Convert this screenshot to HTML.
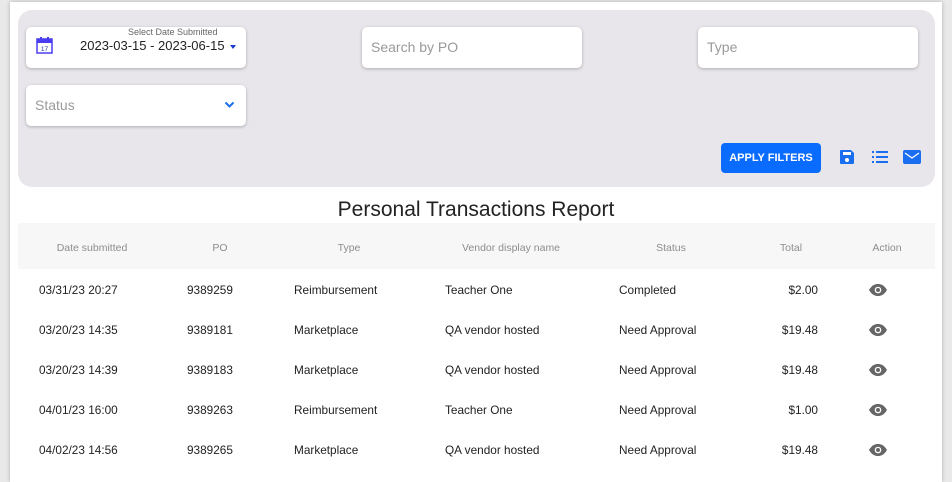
<!DOCTYPE html>
<html><head><style>
*{margin:0;padding:0;box-sizing:border-box}
body{width:952px;height:472px;background:#e9e9e9;font-family:"Liberation Sans",sans-serif;position:relative;overflow:hidden}
.card{position:absolute;left:10px;top:2px;width:932px;height:480px;background:#fff;box-shadow:0 0 4px rgba(0,0,0,.25)}
.panel{position:absolute;left:18px;top:10px;width:917px;height:177px;background:#e8e6eb;border-radius:14px}
.box{position:absolute;background:#fff;border-radius:5px;box-shadow:0 1px 3px rgba(0,0,0,.25);height:41px;width:220px}
.ph{position:absolute;left:9px;top:12px;font-size:14px;color:#9a9a9a}
.t{position:absolute;font-size:11.8px;color:#222;white-space:nowrap}
.h{position:absolute;font-size:10.5px;color:#8d8d8d;white-space:nowrap;transform:translateX(-50%)}
.eye{position:absolute;left:868px}
</style></head><body>
<div class="card"></div>
<div class="panel"></div>
<div class="box" style="left:26px;top:27px">
 <svg style="position:absolute;left:10px;top:9px" width="17" height="18" viewBox="0 0 17 18"><rect x="1" y="3" width="15" height="14" fill="#fff" stroke="#4a3cf0" stroke-width="1.5"/><rect x="1" y="3" width="15" height="4" fill="#4a3cf0"/><rect x="4" y="1" width="2" height="4" fill="#4a3cf0"/><rect x="11" y="1" width="2" height="4" fill="#4a3cf0"/><text x="8.5" y="15" font-size="6.5" text-anchor="middle" fill="#2233aa" font-family="Liberation Sans">17</text></svg>
 <div style="position:absolute;left:102px;top:0px;font-size:9px;color:#666">Select Date Submitted</div>
 <div style="position:absolute;left:54px;top:11px;font-size:13px;color:#222">2023-03-15 - 2023-06-15</div>
 <div style="position:absolute;left:204px;top:18px;border:3.5px solid transparent;border-top:4px solid #1a3fd0;border-bottom:0"></div>
</div>
<div class="box" style="left:362px;top:27px"><div class="ph">Search by PO</div></div>
<div class="box" style="left:698px;top:27px"><div class="ph">Type</div></div>
<div class="box" style="left:26px;top:85px"><div class="ph">Status</div>
 <svg style="position:absolute;left:198px;top:16px" width="11" height="8" viewBox="0 0 11 8"><path d="M1.5 1.5 L5.5 5.5 L9.5 1.5" stroke="#1a6ef0" stroke-width="2" fill="none"/></svg></div>
<div style="position:absolute;left:721px;top:143px;width:100px;height:30px;background:#0a6cff;border-radius:4px;color:#fff;font-weight:bold;font-size:11px;text-align:center;line-height:31px">APPLY FILTERS</div>
<svg style="position:absolute;left:839px;top:149px" width="16" height="16" viewBox="0 0 16 16"><path d="M1 2a1 1 0 0 1 1-1h10l3 3v10a1 1 0 0 1-1 1H2a1 1 0 0 1-1-1z" fill="#1a6ef0"/><rect x="4" y="3" width="8" height="3" fill="#fff"/><circle cx="8" cy="11" r="2" fill="#fff"/></svg>
<svg style="position:absolute;left:872px;top:151px" width="16" height="12" viewBox="0 0 16 12"><g fill="#1a6ef0"><rect x="0" y="0" width="2" height="2"/><rect x="4" y="0" width="12" height="2"/><rect x="0" y="5" width="2" height="2"/><rect x="4" y="5" width="12" height="2"/><rect x="0" y="10" width="2" height="2"/><rect x="4" y="10" width="12" height="2"/></g></svg>
<svg style="position:absolute;left:903px;top:150px" width="18" height="14" viewBox="0 0 18 14"><rect x="0" y="0" width="18" height="14" rx="2" fill="#1a6ef0"/><path d="M2 3 L9 8 L16 3" stroke="#fff" stroke-width="1.3" fill="none"/></svg>
<div style="position:absolute;left:0;width:952px;top:198px;text-align:center;font-size:21px;color:#222">Personal Transactions Report</div>
<div style="position:absolute;left:18px;top:223px;width:917px;height:46px;background:#f7f7f7"></div>
<div class="h" style="left:92px;top:242px">Date submitted</div>
<div class="h" style="left:220px;top:242px">PO</div>
<div class="h" style="left:349px;top:242px">Type</div>
<div class="h" style="left:511px;top:242px">Vendor display name</div>
<div class="h" style="left:671px;top:242px">Status</div>
<div class="h" style="left:791px;top:242px">Total</div>
<div class="h" style="left:887px;top:242px">Action</div>
<div id="rows"></div>
<script>
var d=[["03/31/23 20:27","9389259","Reimbursement","Teacher One","Completed","$2.00"],
["03/20/23 14:35","9389181","Marketplace","QA vendor hosted","Need Approval","$19.48"],
["03/20/23 14:39","9389183","Marketplace","QA vendor hosted","Need Approval","$19.48"],
["04/01/23 16:00","9389263","Reimbursement","Teacher One","Need Approval","$1.00"],
["04/02/23 14:56","9389265","Marketplace","QA vendor hosted","Need Approval","$19.48"]];
var xs=[39,187,294,445,619],h="";
d.forEach(function(r,i){var y=283+i*40;
for(var j=0;j<5;j++)h+='<div class="t" style="left:'+xs[j]+'px;top:'+y+'px">'+r[j]+'</div>';
h+='<div class="t" style="right:134px;top:'+y+'px">'+r[5]+'</div>';
h+='<svg class="eye" style="top:'+(y)+'px" width="20" height="14" viewBox="0 0 20 14"><path d="M1 7C4 2 7 1 10 1s6 1 9 6c-3 5-6 6-9 6S4 12 1 7z" fill="#666"/><circle cx="10" cy="7" r="3.3" fill="#fff"/><circle cx="10" cy="7" r="2" fill="#666"/></svg>';});
document.getElementById("rows").innerHTML=h;
</script>
</body></html>
